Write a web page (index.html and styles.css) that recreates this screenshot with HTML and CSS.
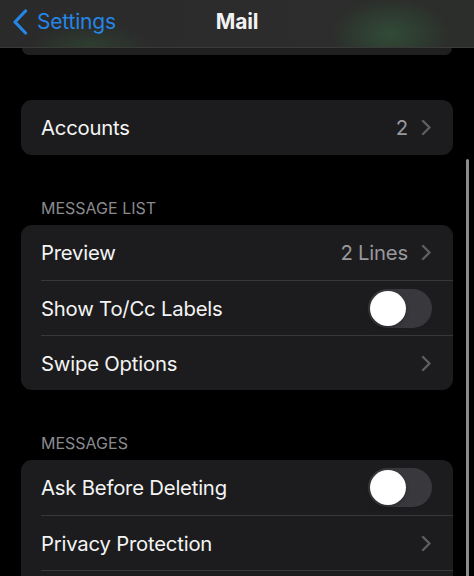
FILE: index.html
```html
<!DOCTYPE html>
<html lang="en">
<head>
<meta charset="utf-8">
<title>Mail</title>
<link rel="stylesheet" href="styles.css">
</head>
<body>
<div class="screen">
  <header class="nav">
    <div class="back">
      <svg class="back-chevron" width="16" height="26" viewBox="0 0 16 26"><path d="M13.5 2 L3 13 L13.5 24" fill="none" stroke="currentColor" stroke-width="3.2" stroke-linecap="round" stroke-linejoin="round"/></svg>
      <span class="back-label">Settings</span>
    </div>
    <div class="title">Mail</div>
    <div class="spacer"></div>
  </header>
  <div class="stub"></div>

  <main class="content">
    <section class="group first">
      <div class="card">
        <div class="row">
          <span class="label">Accounts</span>
          <span class="accessory"><span class="value">2</span><svg class="chev" width="11" height="17" viewBox="0 0 11 17"><path d="M2 2 L8.5 8.5 L2 15" fill="none" stroke="currentColor" stroke-width="2.4" stroke-linecap="round" stroke-linejoin="round"/></svg></span>
        </div>
      </div>
    </section>

    <section class="group">
      <h2 class="group-header">MESSAGE LIST</h2>
      <div class="card">
        <div class="row">
          <span class="label">Preview</span>
          <span class="accessory"><span class="value">2 Lines</span><svg class="chev" width="11" height="17" viewBox="0 0 11 17"><path d="M2 2 L8.5 8.5 L2 15" fill="none" stroke="currentColor" stroke-width="2.4" stroke-linecap="round" stroke-linejoin="round"/></svg></span>
        </div>
        <div class="row">
          <span class="label">Show To/Cc Labels</span>
          <span class="toggle"><span class="knob"></span></span>
        </div>
        <div class="row">
          <span class="label">Swipe Options</span>
          <span class="accessory"><svg class="chev" width="11" height="17" viewBox="0 0 11 17"><path d="M2 2 L8.5 8.5 L2 15" fill="none" stroke="currentColor" stroke-width="2.4" stroke-linecap="round" stroke-linejoin="round"/></svg></span>
        </div>
      </div>
    </section>

    <section class="group">
      <h2 class="group-header">MESSAGES</h2>
      <div class="card">
        <div class="row">
          <span class="label">Ask Before Deleting</span>
          <span class="toggle"><span class="knob"></span></span>
        </div>
        <div class="row">
          <span class="label">Privacy Protection</span>
          <span class="accessory"><svg class="chev" width="11" height="17" viewBox="0 0 11 17"><path d="M2 2 L8.5 8.5 L2 15" fill="none" stroke="currentColor" stroke-width="2.4" stroke-linecap="round" stroke-linejoin="round"/></svg></span>
        </div>
        <div class="row"></div>
      </div>
    </section>
  </main>

  <div class="scrollbar"></div>
</div>
</body>
</html>
```

FILE: styles.css
```css
* { box-sizing: border-box; }

html, body {
  margin: 0;
  padding: 0;
  background: #000;
}

body {
  font-family: Inter, "Liberation Sans", sans-serif;
  color: #fff;
  -webkit-font-smoothing: antialiased;
}

.screen {
  position: relative;
  width: 474px;
  height: 576px;
  overflow: hidden;
  background: #000;
}

.nav {
  height: 48px;
  display: grid;
  grid-template-columns: 1fr auto 1fr;
  align-items: center;
  padding: 0 12px 5px;
  background:
    radial-gradient(ellipse 60px 36px at 390px 34px, rgba(55, 105, 65, 0.5), rgba(55, 105, 65, 0) 100%),
    radial-gradient(ellipse 60px 22px at 90px 46px, rgba(50, 90, 55, 0.4), rgba(50, 90, 55, 0) 100%),
    linear-gradient(90deg, #2a2a2a 0%, #2c2c2c 50%, #2b2e2b 100%);
  box-shadow: inset 0 -1px 0 #3a3a3a;
}

.back {
  display: flex;
  align-items: center;
  gap: 9px;
  color: #2486e6;
}

.back-chevron {
  display: block;
  margin-top: 1px;
}

.back-label {
  font-size: 21px;
  letter-spacing: -0.2px;
}

.title {
  font-size: 21px;
  font-weight: 700;
  letter-spacing: -0.2px;
  color: #f2f2f2;
}

.stub {
  height: 7px;
  margin: 0 22px;
  background: #1f1f1f;
  border-radius: 0 0 10px 10px;
}

.content {
  padding: 0 21px;
}

.group {
  margin-top: 43px;
}

.group.first {
  margin-top: 45px;
}

.group-header {
  margin: 0 0 7px;
  padding: 0 20px;
  font-size: 16px;
  line-height: 20px;
  font-weight: 400;
  color: #8a8a8e;
  letter-spacing: 0;
}

.card {
  background: #1c1c1e;
  border-radius: 11px;
  overflow: hidden;
}

.row {
  position: relative;
  height: 55px;
  display: flex;
  align-items: center;
  justify-content: space-between;
  padding: 0 21px 0 20px;
  font-size: 20.3px;
  letter-spacing: -0.2px;
}

.row + .row {
  border-top: 1px solid #38383a;
  margin-left: 20px;
  padding-left: 0;
}

.label {
  color: #f4f4f4;
}

.accessory {
  display: flex;
  align-items: center;
  gap: 13px;
  color: #5e5e62;
}

.value {
  color: #98989d;
}

.chev {
  display: block;
}

.toggle {
  width: 64px;
  height: 39px;
  border-radius: 20px;
  background: #39393d;
  padding: 2px;
  display: flex;
  align-items: center;
}

.knob {
  width: 36px;
  height: 35px;
  border-radius: 50%;
  background: #fff;
  box-shadow: 0 2px 4px rgba(0, 0, 0, 0.25);
}

.scrollbar {
  position: absolute;
  left: 466px;
  top: 159px;
  width: 3px;
  height: 430px;
  border-radius: 2px;
  background: #8c8c8c;
}
```
